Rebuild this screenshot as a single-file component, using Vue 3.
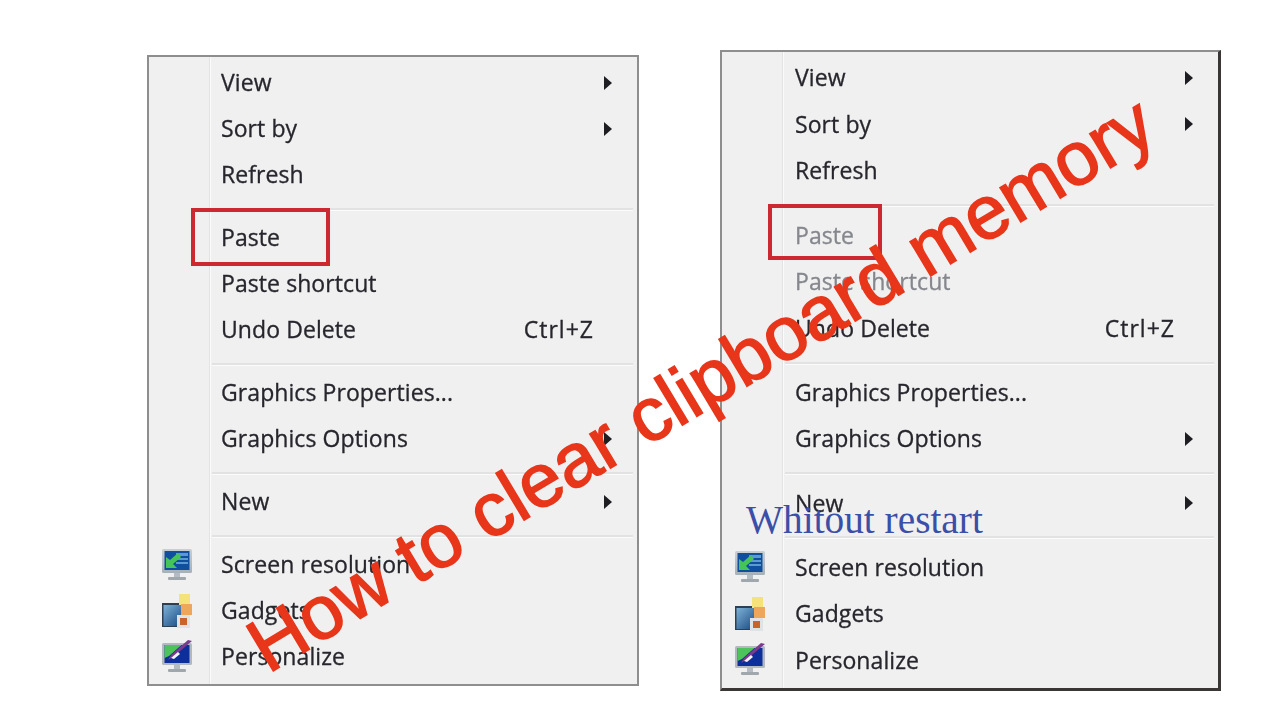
<script setup>
const groups = [
  [
    { label: 'View', arrow: true },
    { label: 'Sort by', arrow: true },
    { label: 'Refresh' }
  ],
  [
    { label: 'Paste', pasteItem: true },
    { label: 'Paste shortcut', pasteItem: true },
    { label: 'Undo Delete', shortcut: 'Ctrl+Z' }
  ],
  [
    { label: 'Graphics Properties...' },
    { label: 'Graphics Options', arrow: true }
  ],
  [{ label: 'New', arrow: true }],
  [
    { label: 'Screen resolution', icon: 'screen' },
    { label: 'Gadgets', icon: 'gadgets' },
    { label: 'Personalize', icon: 'personalize' }
  ]
]

const menus = [
  { id: 'left', disabled: false },
  { id: 'right', disabled: true }
]
</script>

<template>
  <div class="page">
    <div class="menus">
      <div v-for="menu in menus" :key="menu.id" class="menu" :class="'menu-' + menu.id">
        <template v-for="(group, i) in groups" :key="i">
          <div v-if="i > 0" class="sep"></div>
          <div
            v-for="item in group"
            :key="item.label"
            class="row"
            :class="{ disabled: menu.disabled && item.pasteItem }"
          >
            <div class="icon-cell">
              <svg v-if="item.icon === 'screen'" width="32" height="34" viewBox="0 0 32 34">
                <defs>
                  <linearGradient :id="menu.id + 'bez1'" x1="0" y1="0" x2="0" y2="1">
                    <stop offset="0" stop-color="#c8d0d6" /><stop offset="1" stop-color="#a6b0b8" />
                  </linearGradient>
                </defs>
                <rect x="1" y="1" width="30" height="24" rx="1.5" :fill="`url(#${menu.id}bez1)`" />
                <rect x="3.500" y="3" width="25" height="19" fill="#0f4f9f" />
                <path d="M15 5h12v3H15zM15 10h12v2H15zM15 14h12v2H15z" fill="#5a9ad0" />
                <path d="M17 5 L9 12 L5 9 L5 20 L16 20 L12 16 L20 9Z" fill="#45c45a" />
                <rect x="13" y="25" width="6" height="4" fill="#b4bcc2" />
                <rect x="7" y="29" width="18" height="3" rx="1" fill="#a0a8ae" />
              </svg>
              <svg v-else-if="item.icon === 'gadgets'" width="32" height="36" viewBox="0 0 32 36">
                <defs>
                  <linearGradient :id="menu.id + 'win'" x1="0" y1="0" x2="1" y2="1">
                    <stop offset="0" stop-color="#7fb2d6" /><stop offset="1" stop-color="#12457f" />
                  </linearGradient>
                </defs>
                <rect x="1" y="10" width="23" height="24" fill="#2d3f52" />
                <rect x="2.500" y="12" width="20" height="21" :fill="`url(#${menu.id}win)`" />
                <rect x="18" y="1" width="11" height="11" fill="#f5e27a" />
                <rect x="20" y="11" width="11" height="11" fill="#eea65a" />
                <rect x="16" y="22" width="13" height="13" fill="#dfe3e6" />
                <rect x="19" y="25" width="7" height="7" fill="#c9622c" />
              </svg>
              <svg v-else-if="item.icon === 'personalize'" width="32" height="34" viewBox="0 0 32 34">
                <rect x="1" y="3" width="30" height="22" rx="1.500" fill="#b2bac0" />
                <rect x="3.500" y="5" width="25" height="18" fill="#0c2f9c" />
                <path d="M3.500 5h17L8 16l-4.500 2z" fill="#4cc45a" />
                <path d="M31 1 L12 17 L7 20 L10 15 L27 0Z" fill="#7b3a8c" />
                <path d="M17 12 L10 18 L13 19 L19 14Z" fill="#f4f4f8" />
                <rect x="13" y="25" width="6" height="4" fill="#b4bcc2" />
                <rect x="7" y="29" width="18" height="3" rx="1" fill="#a0a8ae" />
              </svg>
            </div>
            <span class="label">{{ item.label }}</span>
            <span v-if="item.shortcut" class="shortcut">{{ item.shortcut }}</span>
            <span v-if="item.arrow" class="arrow"></span>
          </div>
        </template>
      </div>
    </div>

    <div class="red-box red-box-left"></div>
    <div class="red-box red-box-right"></div>
    <div class="subtitle">Whitout restart</div>
    <div class="title">How to clear clipboard memory</div>
  </div>
</template>

<style scoped>
.page {
  position: relative;
  width: 1280px;
  height: 720px;
  background: #fff;
  overflow: hidden;
  font-family: "Open Sans", "Noto Sans", sans-serif;
}

.menus {
  display: flex;
  align-items: flex-start;
  padding-left: 147px;
  gap: 81px;
}

.menu {
  box-sizing: border-box;
  display: flex;
  flex-direction: column;
  padding-top: 2.5px;
  background: linear-gradient(90deg, #e3e3e3, #e3e3e3) no-repeat 60px 0 / 1px 100%,
    linear-gradient(90deg, #fbfbfb, #fbfbfb) no-repeat 61px 0 / 1px 100%,
    #f0f0f0;
  color: #26262c;
  filter: blur(0.4px);
}

.menu-left {
  width: 492px;
  height: 631px;
  margin-top: 55px;
  border: 2px solid #8e8e8e;
  --row: 46px;
  --sep: 17px;
}

.menu-right {
  width: 501px;
  height: 641px;
  margin-top: 50px;
  border: 2px solid #8e8e8e;
  border-right: 3px solid #3a3635;
  border-bottom: 3px solid #3a3635;
  --row: 46.6px;
  --sep: 17.5px;
}

.menu-right .icon-cell {
  width: 73px;
}

.row {
  display: flex;
  align-items: center;
  height: var(--row);
  padding-right: 25px;
  font-size: 23px;
  line-height: 1;
  letter-spacing: 0.08px;
  -webkit-text-stroke: 0.3px currentColor;
}

.disabled {
  color: #85878d;
}

.icon-cell {
  box-sizing: border-box;
  width: 72px;
  flex: none;
  padding-left: 12px;
  display: flex;
  align-items: center;
}

.icon-cell svg {
  filter: blur(0.5px);
}

.label {
  flex: 1;
  white-space: nowrap;
}

.shortcut {
  margin-right: 18px;
  letter-spacing: 1px;
}

.arrow {
  width: 0;
  height: 0;
  border-left: 8px solid #1e1e22;
  border-top: 7px solid transparent;
  border-bottom: 7px solid transparent;
}

.sep {
  position: relative;
  height: var(--sep);
  flex: none;
}

.sep::after {
  content: '';
  position: absolute;
  left: 63px;
  right: 4px;
  top: 10px;
  height: 2px;
  background: #e2e2e2;
  border-bottom: 1px solid #fbfbfb;
}

.red-box {
  position: absolute;
  box-sizing: border-box;
  border: 4px solid #cb2832;
}

.red-box-left {
  left: 191px;
  top: 208px;
  width: 139px;
  height: 58px;
}

.red-box-right {
  left: 768px;
  top: 204px;
  width: 114px;
  height: 56px;
}

.subtitle {
  position: absolute;
  left: 746px;
  top: 498px;
  font-family: "Liberation Serif", serif;
  font-size: 39.3px;
  line-height: 44px;
  color: #3b4ea8;
  white-space: nowrap;
}

.title {
  position: absolute;
  left: 268px;
  top: 604px;
  font-family: "Liberation Sans", Arial, sans-serif;
  font-size: 75.5px;
  line-height: 88px;
  color: #e8361a;
  -webkit-text-stroke: 1.6px #e8361a;
  white-space: nowrap;
  transform-origin: 0 70px;
  transform: rotate(-31deg);
}
</style>
